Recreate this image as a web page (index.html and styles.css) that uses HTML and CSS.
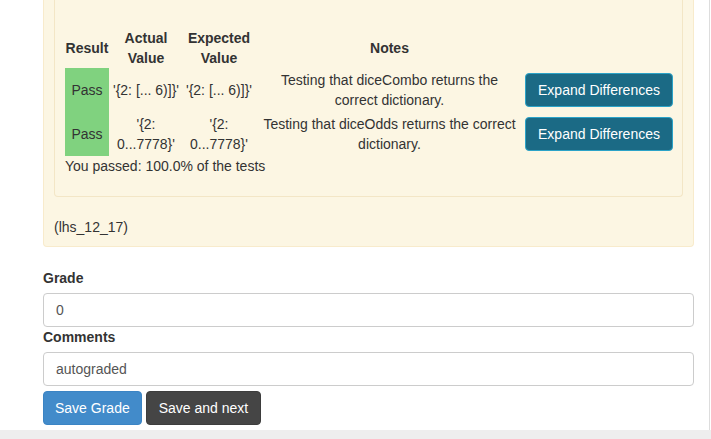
FILE: index.html
```html
<!DOCTYPE html>
<html>
<head>
<meta charset="utf-8">
<link rel="stylesheet" href="styles.css">
</head>
<body>
<div class="page">
  <div class="content">
    <div class="outer">
      <div class="inner">
        <table class="results">
          <colgroup>
            <col class="c-result"><col class="c-actual"><col class="c-expected"><col class="c-notes"><col class="c-btn">
          </colgroup>
          <thead>
            <tr><th>Result</th><th>Actual Value</th><th>Expected Value</th><th>Notes</th><th></th></tr>
          </thead>
          <tbody>
            <tr>
              <td class="pass">Pass</td>
              <td>'{2: [... 6)]}'</td>
              <td>'{2: [... 6)]}'</td>
              <td class="note">Testing that diceCombo returns the correct dictionary.</td>
              <td><button class="btn btn-expand">Expand Differences</button></td>
            </tr>
            <tr>
              <td class="pass">Pass</td>
              <td>'{2: 0...7778}'</td>
              <td>'{2: 0...7778}'</td>
              <td class="note">Testing that diceOdds returns the correct dictionary.</td>
              <td><button class="btn btn-expand">Expand Differences</button></td>
            </tr>
          </tbody>
        </table>
        <div class="summary">You passed: 100.0% of the tests</div>
      </div>
      <div class="ident">(lhs_12_17)</div>
    </div>
    <form class="grade-form">
      <label class="lbl">Grade</label>
      <input class="field" type="text" value="0">
      <label class="lbl">Comments</label>
      <input class="field" type="text" value="autograded">
      <div class="actions">
        <button type="button" class="btn btn-primary">Save Grade</button>
        <button type="button" class="btn btn-dark">Save and next</button>
      </div>
    </form>
  </div>
</div>
<div class="footer-strip"></div>
</body>
</html>
```
FILE: styles.css
```css
html, body {
  margin: 0;
  padding: 0;
  background: #ffffff;
  font-family: "Liberation Sans", Arial, sans-serif;
  font-size: 14px;
  line-height: 20px;
  color: #333333;
}
.page {
  width: 710px;
  height: 430px;
  border-right: 1px solid #dddddd;
  box-sizing: border-box;
  overflow: hidden;
}
.content {
  padding-left: 43px;
  width: 651px;
}
.outer {
  background: #fcf6e3;
  border: 1px solid #f8ebcc;
  border-top: none;
  border-radius: 0 0 4px 4px;
  padding: 0 10px 9px 10px;
}
.inner {
  border: 1px solid #f3e6c6;
  border-top: none;
  border-radius: 0 0 4px 4px;
  padding: 27px 10px 20px 10px;
  margin-bottom: 20px;
}
.results {
  border-collapse: collapse;
  table-layout: fixed;
  width: 609px;
}
.c-result { width: 44px; }
.c-actual { width: 74px; }
.c-expected { width: 72px; }
.c-notes { width: 269px; }
.c-btn { width: 150px; }
.results th {
  font-weight: bold;
  text-align: center;
  vertical-align: middle;
  padding: 0;
  height: 41px;
}
.results td {
  text-align: center;
  vertical-align: middle;
  padding: 2px 0;
}
.results td.note {
  padding: 2px 5px;
}
.results td.pass {
  background: #80d27f;
}
.btn {
  font-family: "Liberation Sans", Arial, sans-serif;
  font-size: 14px;
  line-height: 20px;
  padding: 6px 12px;
  border-radius: 4px;
  border: 1px solid transparent;
  color: #ffffff;
  cursor: pointer;
  margin: 0;
}
.btn-expand {
  background: #1b6a85;
  border-color: #2ba3c8;
  width: 148px;
  padding: 6px 0;
}
.summary {
  text-align: left;
}
.ident {
  line-height: 20px;
}
.grade-form {
  margin: 21px 0 0 0;
}
.lbl {
  display: block;
  font-weight: bold;
  margin-bottom: 5px;
}
.field {
  display: block;
  box-sizing: border-box;
  width: 651px;
  height: 34px;
  padding: 6px 12px;
  border: 1px solid #cccccc;
  border-radius: 4px;
  font-family: "Liberation Sans", Arial, sans-serif;
  font-size: 14px;
  color: #555555;
  background: #ffffff;
  margin: 0;
}
.actions {
  display: flex;
  gap: 4px;
  margin-top: 5px;
}
.btn-primary {
  background: #428bca;
  border-color: #3b84c4;
  padding: 6px 11px;
}
.btn-dark {
  background: #454545;
  border-color: #3d3d3d;
}
.footer-strip {
  height: 9px;
  background: #eeeeee;
}
```
